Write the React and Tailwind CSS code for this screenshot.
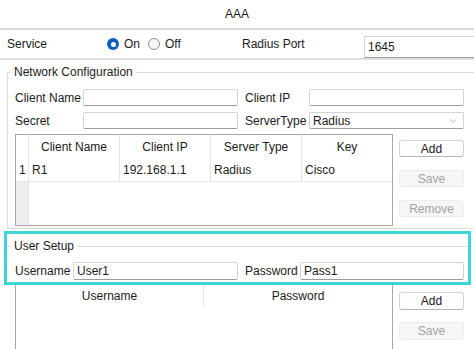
import { ChevronDown } from 'lucide-react'

const inputCls = 'h-[17px] shrink-0 bg-white border border-[#d4d4d4] border-b-[#9c9c9c] rounded-[2px] px-[3px] flex items-center'
const btnCls = 'w-[65px] flex items-center justify-center rounded-[3px] border'

function Radio({ checked }) {
  if (checked) {
    return (
      <span className="w-[12px] h-[12px] shrink-0 rounded-full bg-[#0a5fc2] flex items-center justify-center">
        <span className="w-[5px] h-[5px] rounded-full bg-white" />
      </span>
    )
  }
  return <span className="block w-[12px] h-[12px] shrink-0 rounded-full border border-[#8d8d8d] bg-[#f7f7f7]" />
}

function Btn({ label, disabled, h = 'h-[17px]' }) {
  return (
    <div
      className={`${btnCls} ${h} ${
        disabled
          ? 'bg-[#f6f6f6] border-[#ececec] text-[#a3a3a3]'
          : 'bg-[#fdfdfd] border-[#d3d3d3] border-b-[#b5b5b5] text-[#1b1b1b]'
      }`}
    >
      {label}
    </div>
  )
}

export default function App() {
  return (
    <div className="w-[474px] h-[349px] overflow-hidden bg-white text-[12px] leading-none text-[#1b1b1b] font-['Liberation_Sans',Arial,sans-serif]">
      {/* Titulo */}
      <div className="h-[28px] flex items-center justify-center">AAA</div>
      <div className="h-[2px] bg-[#d9d9d9]" />

      {/* Service */}
      <div className="h-[28px] flex items-center pl-[7px]">
        <span className="w-[100px] shrink-0">Service</span>
        <div className="w-[135px] shrink-0 flex items-center">
          <Radio checked />
          <span className="ml-[5px]">On</span>
          <span className="ml-[8px] flex"><Radio /></span>
          <span className="ml-[5px]">Off</span>
        </div>
        <span className="w-[122px] shrink-0">Radius Port</span>
        <div className="self-end h-[22px] w-[140px] shrink-0 bg-white border border-[#d4d4d4] border-b-[#9c9c9c] px-[3px] flex items-center">1645</div>
      </div>
      <div className="h-[2px] bg-[#dedede]" />

      {/* Network Configuration */}
      <fieldset className="mt-[4px] ml-[7px] w-[480px] border border-[#dcdcdc] pb-[2px]">
        <legend className="ml-[3px] px-[3px] leading-[16px]">Network Configuration</legend>
        <div className="pl-[7px] mt-[9px] flex items-center">
          <span className="w-[68px] shrink-0">Client Name</span>
          <div className={`${inputCls} w-[155px]`} />
          <span className="ml-[7px] w-[64px] shrink-0">Client IP</span>
          <div className={`${inputCls} w-[155px]`} />
        </div>
        <div className="pl-[7px] mt-[6px] flex items-center">
          <span className="w-[68px] shrink-0">Secret</span>
          <div className={`${inputCls} w-[155px]`} />
          <span className="ml-[7px] w-[64px] shrink-0">ServerType</span>
          <div className={`${inputCls} w-[155px] justify-between`}>
            <span>Radius</span>
            <ChevronDown size={10} strokeWidth={1.5} className="text-[#8a8a8a] mr-[2px]" />
          </div>
        </div>
        <div className="pl-[7px] mt-[5px] flex">
          <div className="w-[378px] h-[92px] shrink-0 border border-[#a8a8a8] flex flex-col">
            <div className="grid grid-cols-[13px_91px_91px_91px_90px] h-[23px]">
              <div className="border-r border-[#e4e4e4]" />
              <div className="border-r border-[#e4e4e4] flex items-center justify-center">Client Name</div>
              <div className="border-r border-[#e4e4e4] flex items-center justify-center">Client IP</div>
              <div className="border-r border-[#e4e4e4] flex items-center justify-center">Server Type</div>
              <div className="flex items-center justify-center">Key</div>
            </div>
            <div className="grid grid-cols-[13px_91px_91px_91px_90px] h-[24px] border-b border-[#e4e4e4]">
              <div className="border-r border-[#e4e4e4] flex items-center pl-[3px]">1</div>
              <div className="border-r border-[#e4e4e4] flex items-center pl-[3px]">R1</div>
              <div className="border-r border-[#e4e4e4] flex items-center pl-[3px]">192.168.1.1</div>
              <div className="border-r border-[#e4e4e4] flex items-center pl-[3px]">Radius</div>
              <div className="flex items-center pl-[3px]">Cisco</div>
            </div>
            <div className="flex-1 flex">
              <div className="w-[13px] bg-[#efefef] border-r border-[#e4e4e4]" />
            </div>
          </div>
          <div className="ml-[6px] pt-[6px] flex flex-col gap-[13px]">
            <Btn label="Add" />
            <Btn label="Save" disabled />
            <Btn label="Remove" disabled />
          </div>
        </div>
      </fieldset>

      {/* User Setup (resaltado) */}
      <div className="mt-[2px] ml-[4px] w-[467px] h-[54px] border-[3px] border-[#3fd4d8] pt-[4px]">
        <fieldset className="border-0 border-t border-[#dcdcdc]">
          <legend className="ml-[4px] px-[3px] leading-[16px]">User Setup</legend>
          <div className="pl-[8px] mt-[8px] flex items-center">
            <span className="w-[58px] shrink-0">Username</span>
            <div className={`${inputCls} h-[18px] w-[165px]`}>User1</div>
            <span className="ml-[7px] w-[55px] shrink-0">Password</span>
            <div className={`${inputCls} h-[18px] w-[164px]`}>Pass1</div>
          </div>
        </fieldset>
      </div>

      {/* Tabla usuarios */}
      <div className="flex h-[64px]">
        <div className="ml-[15px] w-[378px] shrink-0 border-l border-r border-[#a8a8a8]">
          <div className="grid grid-cols-[188px_188px] h-[21px]">
            <div className="border-r border-[#e4e4e4] flex items-center justify-center">Username</div>
            <div className="flex items-center justify-center">Password</div>
          </div>
        </div>
        <div className="ml-[6px] pt-[7px] flex flex-col gap-[12px]">
          <Btn label="Add" h="h-[18px]" />
          <Btn label="Save" disabled h="h-[18px]" />
        </div>
      </div>
    </div>
  )
}
